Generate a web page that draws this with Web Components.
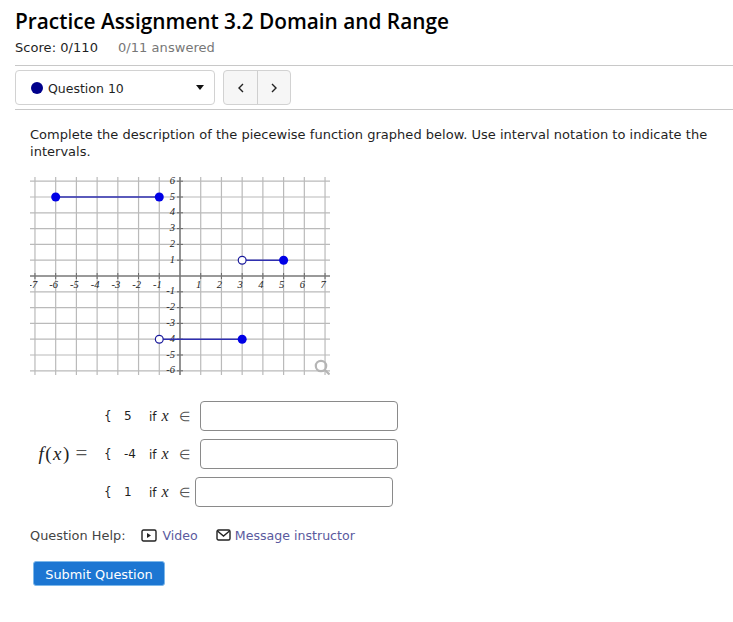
<!DOCTYPE html>
<html>
<head>
<meta charset="utf-8">
<title>Practice Assignment 3.2</title>
<style>
  html, body { margin: 0; padding: 0; background: #fff; }
  body { font-family: "DejaVu Sans", Verdana, sans-serif; font-size: 13px; color: #1f1f1f; }
</style>
</head>
<body>
<assignment-page>
  <assignment-header title-text="Practice Assignment 3.2 Domain and Range" score="Score: 0/110" answered="0/11 answered"></assignment-header>
  <question-nav label="Question 10"></question-nav>
  <question-body>
    <p slot="text">Complete the description of the piecewise function graphed below. Use interval notation to indicate the intervals.</p>
    <piece-graph slot="graph"></piece-graph>
    <piece-function slot="answer">
      <piece-row value="5"></piece-row>
      <piece-row value="-4"></piece-row>
      <piece-row value="1" tight></piece-row>
    </piece-function>
    <question-help slot="help"></question-help>
    <submit-button slot="submit">Submit Question</submit-button>
  </question-body>
</assignment-page>

<script>
class AssignmentPage extends HTMLElement {
  constructor() {
    super();
    this.attachShadow({ mode: 'open' });
    this.shadowRoot.innerHTML = `
      <style>
        :host { display: block; padding: 0 0 0 15px; }
      </style>
      <slot></slot>
    `;
  }
}

class AssignmentHeader extends HTMLElement {
  constructor() {
    super();
    this.attachShadow({ mode: 'open' });
  }

  connectedCallback() {
    this.shadowRoot.innerHTML = `
      <style>
        :host { display: block; padding-top: 8px; box-sizing: border-box; border-bottom: 1px solid #c8c8c8; height: 66px; }
        h1 {
          margin: 0;
          font: 600 20.8px/27px "Open Sans", "DejaVu Sans", sans-serif;
          color: #000;
        }
        .meta { display: flex; gap: 20px; margin-top: 4px; font-size: 13px; line-height: 18px; letter-spacing: .05px; }
        .meta span:last-child { color: #777; }
      </style>
      <h1>${this.getAttribute('title-text')}</h1>
      <div class="meta">
        <span>${this.getAttribute('score')}</span>
        <span>${this.getAttribute('answered')}</span>
      </div>
    `;
  }
}

class QuestionNav extends HTMLElement {
  constructor() {
    super();
    this.attachShadow({ mode: 'open' });
  }

  connectedCallback() {
    this.shadowRoot.innerHTML = `
      <style>
        :host {
          display: flex;
          gap: 8px;
          padding: 4px 0 4px;
          border-bottom: 1px solid #c8c8c8;
        }
        .select {
          width: 200px;
          height: 35px;
          box-sizing: border-box;
          border: 1px solid #d2d2d2;
          border-radius: 4px;
          display: flex;
          align-items: center;
          padding: 0 10px 0 15px;
          gap: 5px;
          font-size: 12.5px;
        }
        .dot { width: 12px; height: 12px; border-radius: 50%; background: #00008b; }
        .label { flex: 1; padding-top: 1px; }
        .caret { width: 0; height: 0; border: 4px solid transparent; border-top: 5px solid #111; border-bottom: 0; }
        .pager { display: flex; height: 35px; border: 1px solid #d2d2d2; border-radius: 4px; box-sizing: border-box; background: #f6f6f6; }
        .pager div { width: 33px; display: flex; align-items: center; justify-content: center; }
        .pager div + div { width: 32px; border-left: 1px solid #cfcfcf; }
        svg { display: block; }
      </style>
      <div class="select">
        <span class="dot"></span>
        <span class="label">${this.getAttribute('label')}</span>
        <span class="caret"></span>
      </div>
      <div class="pager">
        <div><svg width="8" height="10" viewBox="0 0 8 10"><path d="M6 1 L2 5 L6 9" fill="none" stroke="#222" stroke-width="1.4"/></svg></div>
        <div><svg width="8" height="10" viewBox="0 0 8 10"><path d="M2 1 L6 5 L2 9" fill="none" stroke="#222" stroke-width="1.4"/></svg></div>
      </div>
    `;
  }
}

class QuestionBody extends HTMLElement {
  constructor() {
    super();
    this.attachShadow({ mode: 'open' });
    this.shadowRoot.innerHTML = `
      <style>
        :host { display: block; padding: 16px 15px 0 15px; }
        ::slotted(p) { margin: 0; line-height: 17px; letter-spacing: .02px; }
        ::slotted(piece-graph) { margin-top: 15px; }
        ::slotted(piece-function) { margin-top: 26px; }
        ::slotted(question-help) { margin-top: 19px; }
        ::slotted(submit-button) { margin: 17px 0 0 3px; }
      </style>
      <slot name="text"></slot>
      <slot name="graph"></slot>
      <slot name="answer"></slot>
      <slot name="help"></slot>
      <slot name="submit"></slot>
    `;
  }
}

class PieceGraph extends HTMLElement {
  constructor() {
    super();
    this.attachShadow({ mode: 'open' });
  }

  connectedCallback() {
    const ox = 150, oy = 101, ux = 20.72, uy = 15.8;
    let grid = '', labels = '';
    for (let i = -7; i <= 7; i++) {
      const x = ox + i * ux;
      if (i !== 0) {
        grid += `<line x1="${x}" y1="2" x2="${x}" y2="200" stroke="#bababa" stroke-width="1.2"/>`;
        grid += `<line x1="${x}" y1="${oy - 3}" x2="${x}" y2="${oy + 3}" stroke="#666"/>`;
        labels += `<text x="${x - 2}" y="${oy + 12}" text-anchor="middle">${i}</text>`;
      }
    }
    for (let j = -6; j <= 6; j++) {
      const y = oy - j * uy;
      if (j !== 0) {
        grid += `<line x1="0" y1="${y}" x2="300" y2="${y}" stroke="#bababa" stroke-width="1.2"/>`;
        grid += `<line x1="${ox - 3}" y1="${y}" x2="${ox + 3}" y2="${y}" stroke="#666"/>`;
        labels += `<text x="${ox - 5}" y="${y + 2.5}" text-anchor="end">${j}</text>`;
      }
    }
    const px = v => ox + v * ux;
    const py = v => oy - v * uy;
    const seg = (a, b, y) => `<line x1="${px(a)}" y1="${py(y)}" x2="${px(b)}" y2="${py(y)}" stroke="#2f2fb0" stroke-width="1.4"/>`;
    const dot = (x, y, open) => `<circle cx="${px(x)}" cy="${py(y)}" r="${open ? 3.9 : 4.5}" fill="${open ? '#fff' : '#0000e6'}" stroke="${open ? '#1a1a9c' : 'none'}" stroke-width="1.2"/>`;
    this.shadowRoot.innerHTML = `
      <style>
        :host { display: block; width: 300px; height: 200px; }
        svg { display: block; }
        text { font: italic 10.5px "Liberation Serif", serif; fill: #222; }
      </style>
      <svg width="300" height="200" viewBox="0 0 300 200">
        ${grid}
        <line x1="0" y1="${oy}" x2="300" y2="${oy}" stroke="#777" stroke-width="1.6"/>
        <line x1="${ox}" y1="2" x2="${ox}" y2="200" stroke="#777" stroke-width="1.6"/>
        ${labels}
        ${seg(-6, -1, 5)}${seg(3, 5, 1)}${seg(-1, 3, -4)}
        ${dot(-6, 5)}${dot(-1, 5)}${dot(3, 1, true)}${dot(5, 1)}${dot(-1, -4, true)}${dot(3, -4)}
        <g fill="none" stroke="#b5b5b5" stroke-width="2.2">
          <circle cx="291" cy="191" r="5.2"/>
          <line x1="295" y1="195" x2="299.5" y2="199.5"/>
        </g>
      </svg>
    `;
  }
}

class PieceFunction extends HTMLElement {
  constructor() {
    super();
    this.attachShadow({ mode: 'open' });
    this.shadowRoot.innerHTML = `
      <style>
        :host { display: flex; align-items: center; }
        .name {
          width: 74px;
          padding-left: 7px;
          box-sizing: border-box;
          display: flex;
          align-items: baseline;
          font: 19px "Liberation Serif", serif;
          white-space: nowrap;
          color: #222;
        }
        .name i { font-style: italic; padding: 0 1.5px; }
        .eq { margin-left: 6px; font-size: 21px; line-height: 1; color: #555; }
        .rows { display: flex; flex-direction: column; gap: 8px; }
      </style>
      <div class="name"><i>f</i>(<i>x</i>)<span class="eq">=</span></div>
      <div class="rows"><slot></slot></div>
    `;
  }
}

class PieceRow extends HTMLElement {
  constructor() {
    super();
    this.attachShadow({ mode: 'open' });
  }

  connectedCallback() {
    const tight = this.hasAttribute('tight');
    this.shadowRoot.innerHTML = `
      <style>
        :host { display: flex; align-items: center; height: 30px; font-size: 12px; }
        .brace { width: 20px; }
        .value { width: 25px; }
        .cond { width: 51px; display: flex; align-items: baseline; white-space: nowrap; }
        .cond i { font: italic 16px "Liberation Serif", serif; margin-left: 5px; width: 17px; }
        .cond b { font: 13px "Liberation Serif", serif; color: #555; }
        input {
          width: 198px;
          height: 30px;
          box-sizing: border-box;
          border: 1px solid #8a8a8a;
          border-radius: 4px;
          margin: 0 0 0 ${tight ? '-5px' : '0'};
          background: #fff;
        }
      </style>
      <span class="brace">{</span>
      <span class="value">${this.getAttribute('value')}</span>
      <span class="cond">if<i>x</i><b>∈</b></span>
      <input type="text">
    `;
  }
}

class QuestionHelp extends HTMLElement {
  constructor() {
    super();
    this.attachShadow({ mode: 'open' });
    this.shadowRoot.innerHTML = `
      <style>
        :host { display: flex; align-items: center; height: 18px; color: #444; font-size: 12.6px; }
        .label { margin-right: 16px; font-size: 12.9px; }
        a { color: #5a5a9e; text-decoration: none; display: flex; align-items: center; gap: 4px; margin-right: 18px; }
        a.video { gap: 5px; }
        svg { display: block; }
      </style>
      <span class="label">Question Help:</span>
      <a class="video" href="#"><svg width="16" height="13" viewBox="0 0 16 13"><rect x="1" y="1" width="14" height="11" rx="1.5" fill="none" stroke="#222" stroke-width="1.4"/><path d="M6 4 L10 6.5 L6 9 Z" fill="#222"/></svg>Video</a>
      <a href="#"><svg width="15" height="12" viewBox="0 0 15 12"><rect x="1" y="1" width="13" height="10" rx="1.5" fill="none" stroke="#222" stroke-width="1.4"/><path d="M1.5 2 L7.5 7 L13.5 2" fill="none" stroke="#222" stroke-width="1.4"/></svg>Message instructor</a>
    `;
  }
}

class SubmitButton extends HTMLElement {
  constructor() {
    super();
    this.attachShadow({ mode: 'open' });
    this.shadowRoot.innerHTML = `
      <style>
        :host {
          display: inline-block;
          background: #1c76d2;
          color: #fff;
          border: 1px solid #7db8ea;
          border-radius: 3px;
          height: 25px;
          line-height: 25px;
          width: 132px;
          box-sizing: border-box;
          text-align: center;
          font-size: 12.9px;
        }
      </style>
      <slot></slot>
    `;
  }
}

customElements.define('assignment-page', AssignmentPage);
customElements.define('assignment-header', AssignmentHeader);
customElements.define('question-nav', QuestionNav);
customElements.define('question-body', QuestionBody);
customElements.define('piece-graph', PieceGraph);
customElements.define('piece-function', PieceFunction);
customElements.define('piece-row', PieceRow);
customElements.define('question-help', QuestionHelp);
customElements.define('submit-button', SubmitButton);
</script>
</body>
</html>
